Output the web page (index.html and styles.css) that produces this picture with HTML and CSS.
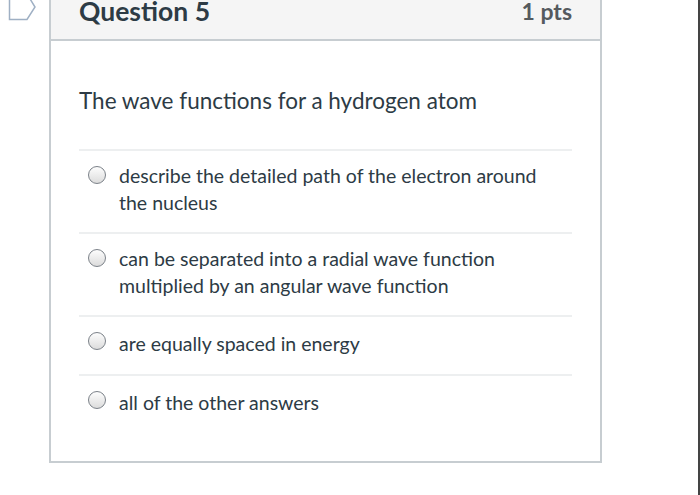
FILE: index.html
```html
<!DOCTYPE html>
<html>
<head>
<meta charset="utf-8">
<link rel="stylesheet" href="styles.css">
</head>
<body>
<div class="page">
  <div class="gutter">
    <svg class="flag" width="30" height="22" viewBox="0 0 30 22">
      <polygon points="1.5,-6 19,-6 27,7 19,19.5 1.5,19.5" fill="#fff" stroke="#9fb0c4" stroke-width="1.5"/>
    </svg>
  </div>
  <div class="card">
    <div class="card-head">
      <h2 class="title">Question 5</h2>
      <span class="pts">1 pts</span>
    </div>
    <div class="card-body">
      <p class="question">The wave functions for a hydrogen atom</p>
      <ul class="answers">
        <li class="answer"><span class="radio"></span><span class="label">describe the detailed path of the electron around the nucleus</span></li>
        <li class="answer"><span class="radio"></span><span class="label">can be separated into a radial wave function multiplied by an angular wave function</span></li>
        <li class="answer"><span class="radio"></span><span class="label">are equally spaced in energy</span></li>
        <li class="answer last"><span class="radio"></span><span class="label">all of the other answers</span></li>
      </ul>
    </div>
  </div>
  <div class="spacer"></div>
  <div class="edge"></div>
</div>
</body>
</html>
```
FILE: styles.css
```css
html, body {
  margin: 0;
  padding: 0;
  background: #fff;
}
body {
  font-family: Lato, "Open Sans", sans-serif;
  color: #2d3b45;
  width: 700px;
  height: 495px;
  overflow: hidden;
}
.page {
  display: flex;
  height: 495px;
}
.gutter {
  width: 49px;
  flex: none;
}
.flag {
  display: block;
  margin-left: 8px;
}
.card {
  width: 553px;
  flex: none;
  align-self: flex-start;
  margin-top: -14px;
  box-sizing: border-box;
  border-style: solid;
  border-color: #c7cdd1;
  border-width: 0 2px 2px 2px;
}
.card-head {
  height: 55px;
  box-sizing: border-box;
  background: #f5f5f5;
  border-bottom: 2px solid #c7cdd1;
  display: flex;
  align-items: center;
  justify-content: space-between;
  padding: 0 28px 3px 28px;
}
.title {
  margin: 0;
  font-size: 26.5px;
  line-height: 24px;
  font-weight: 700;
  color: #2d3b45;
}
.pts {
  font-size: 23px;
  line-height: 22px;
  font-weight: 700;
  color: #555a5e;
}
.card-body {
  padding: 46px 28px 28px 28px;
}
.question {
  margin: 0 0 34px 0;
  font-size: 22.5px;
  line-height: 28px;
}
.answers {
  list-style: none;
  margin: 0;
  padding: 0;
  border-top: 2px solid #edeff0;
}
.answer {
  display: flex;
  align-items: center;
  padding: 11px 0 16px 9px;
  min-height: 30px;
  border-bottom: 2px solid #edeff0;
  font-size: 19.5px;
  line-height: 27px;
}
.answer.last {
  border-bottom: none;
}
.radio {
  flex: none;
  align-self: flex-start;
  width: 18px;
  height: 18px;
  margin-top: 4px;
  margin-right: 13px;
  border-radius: 50%;
  border: 1px solid #7b8188;
  background: linear-gradient(#fdfdfd, #dcdcdc);
  box-sizing: border-box;
}
.label {
  max-width: 440px;
}
.spacer {
  flex: 1;
}
.edge {
  width: 2px;
  background: #444;
  flex: none;
}
```
